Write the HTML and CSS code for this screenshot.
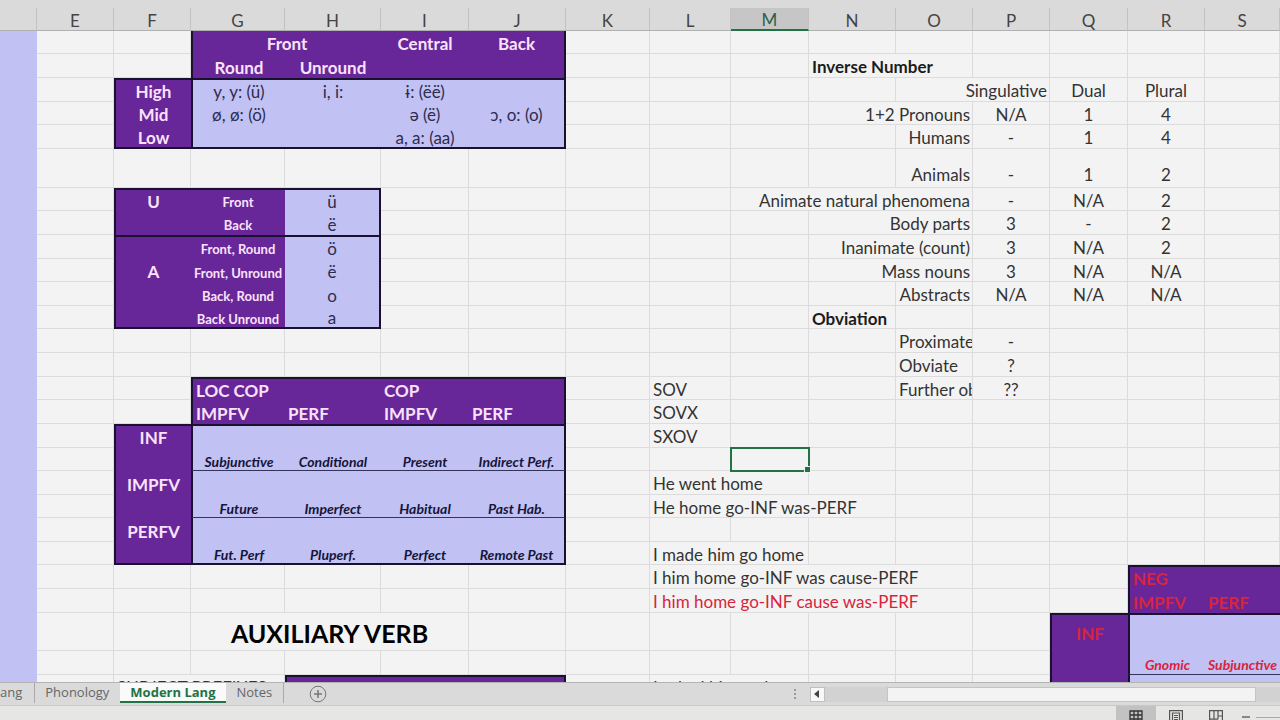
FILE: index.html
```
<!DOCTYPE html>
<html lang="en">
<head>
    <meta charset="UTF-8">
    <meta name="viewport" content="width=device-width, initial-scale=1.0">
    <title>Modern Lang</title>
    <link rel="stylesheet" href="styles.css">
</head>
<body>
    <main class="sheet">
        <table class="grid">
            <colgroup>
                <col class="w37"><col class="w77"><col class="w77"><col class="w94"><col class="w96"><col class="w88"><col class="w97"><col class="w84">
                <col class="w81"><col class="w78"><col class="w87"><col class="w77"><col class="w77"><col class="w78"><col class="w77"><col>
            </colgroup>
            <thead>
                <tr>
                    <th></th><th>E</th><th>F</th><th>G</th><th>H</th><th>I</th><th>J</th><th>K</th>
                    <th>L</th><th class="current">M</th><th>N</th><th>O</th><th>P</th><th>Q</th><th>R</th><th>S</th>
                </tr>
            </thead>
            <tbody>
                <!-- Vowels / inverse number -->
                <tr class="short">
                    <td class="val"></td><td></td><td></td>
                    <td class="head bl" colspan="2">Front</td><td class="head">Central</td><td class="head br">Back</td>
                    <td></td><td></td><td></td><td></td><td></td><td></td><td></td><td></td><td></td>
                </tr>
                <tr>
                    <td class="val"></td><td></td><td></td>
                    <td class="head bl">Round</td><td class="head">Unround</td><td class="head"></td><td class="head br"></td>
                    <td></td><td></td><td></td><td class="left strong" colspan="2">Inverse Number</td><td></td><td></td><td></td><td></td>
                </tr>
                <tr>
                    <td class="val"></td><td></td>
                    <td class="head bt bl">High</td><td class="val bt bl">y, y: (ü)</td><td class="val bt">i, i:</td><td class="val bt">ɨ: (ëë)</td><td class="val bt br"></td>
                    <td></td><td></td><td></td><td></td><td class="right" colspan="2">Singulative</td><td>Dual</td><td>Plural</td><td></td>
                </tr>
                <tr class="short">
                    <td class="val"></td><td></td>
                    <td class="head bl">Mid</td><td class="val bl">ø, ø: (ö)</td><td class="val"></td><td class="val">ə (ë)</td><td class="val br">ɔ, o: (o)</td>
                    <td></td><td></td><td></td><td class="right" colspan="2">1+2 Pronouns</td><td>N/A</td><td>1</td><td>4</td><td></td>
                </tr>
                <tr>
                    <td class="val"></td><td></td>
                    <td class="head bl bb">Low</td><td class="val bl bb"></td><td class="val bb"></td><td class="val bb">a, a: (aa)</td><td class="val br bb"></td>
                    <td></td><td></td><td></td><td></td><td class="right">Humans</td><td>-</td><td>1</td><td>4</td><td></td>
                </tr>
                <tr class="tall">
                    <td class="val"></td><td></td><td></td><td></td><td></td><td></td><td></td><td></td>
                    <td></td><td></td><td></td><td class="right">Animals</td><td>-</td><td>1</td><td>2</td><td></td>
                </tr>

                <!-- Harmony -->
                <tr class="short">
                    <td class="val"></td><td></td>
                    <td class="head bt bl">U</td><td class="head small bt">Front</td><td class="val bt br">ü</td><td></td><td></td><td></td>
                    <td></td><td class="right" colspan="3">Animate natural phenomena</td><td>-</td><td>N/A</td><td>2</td><td></td>
                </tr>
                <tr>
                    <td class="val"></td><td></td>
                    <td class="head bl"></td><td class="head small">Back</td><td class="val br">ë</td><td></td><td></td><td></td>
                    <td></td><td></td><td class="right" colspan="2">Body parts</td><td>3</td><td>-</td><td>2</td><td></td>
                </tr>
                <tr>
                    <td class="val"></td><td></td>
                    <td class="head bt bl"></td><td class="head small bt">Front, Round</td><td class="val bt br">ö</td><td></td><td></td><td></td>
                    <td></td><td></td><td class="right" colspan="2">Inanimate (count)</td><td>3</td><td>N/A</td><td>2</td><td></td>
                </tr>
                <tr class="short">
                    <td class="val"></td><td></td>
                    <td class="head bl">A</td><td class="head small">Front, Unround</td><td class="val br">ë</td><td></td><td></td><td></td>
                    <td></td><td></td><td class="right" colspan="2">Mass nouns</td><td>3</td><td>N/A</td><td>N/A</td><td></td>
                </tr>
                <tr>
                    <td class="val"></td><td></td>
                    <td class="head bl"></td><td class="head small">Back, Round</td><td class="val br">o</td><td></td><td></td><td></td>
                    <td></td><td></td><td></td><td class="right">Abstracts</td><td>N/A</td><td>N/A</td><td>N/A</td><td></td>
                </tr>
                <tr class="short">
                    <td class="val"></td><td></td>
                    <td class="head bl bb"></td><td class="head small bb">Back Unround</td><td class="val br bb">a</td><td></td><td></td><td></td>
                    <td></td><td></td><td class="left strong">Obviation</td><td></td><td></td><td></td><td></td><td></td>
                </tr>
                <tr>
                    <td class="val"></td><td></td><td></td><td></td><td></td><td></td><td></td><td></td>
                    <td></td><td></td><td></td><td class="left">Proximate</td><td>-</td><td></td><td></td><td></td>
                </tr>
                <tr>
                    <td class="val"></td><td></td><td></td><td></td><td></td><td></td><td></td><td></td>
                    <td></td><td></td><td></td><td class="left">Obviate</td><td>?</td><td></td><td></td><td></td>
                </tr>

                <!-- Copulas / word order -->
                <tr class="short">
                    <td class="val"></td><td></td><td></td>
                    <td class="head left bt bl">LOC COP</td><td class="head bt"></td><td class="head left bt">COP</td><td class="head bt br"></td>
                    <td></td><td class="left">SOV</td><td></td><td></td><td class="left">Further obviate</td><td>??</td><td></td><td></td><td></td>
                </tr>
                <tr>
                    <td class="val"></td><td></td><td></td>
                    <td class="head left bl">IMPFV</td><td class="head left">PERF</td><td class="head left">IMPFV</td><td class="head left br">PERF</td>
                    <td></td><td class="left">SOVX</td><td></td><td></td><td></td><td></td><td></td><td></td><td></td>
                </tr>
                <tr>
                    <td class="val"></td><td></td>
                    <td class="head bt bl">INF</td><td class="val bt bl"></td><td class="val bt"></td><td class="val bt"></td><td class="val bt br"></td>
                    <td></td><td class="left">SXOV</td><td></td><td></td><td></td><td></td><td></td><td></td><td></td>
                </tr>
                <tr class="short">
                    <td class="val"></td><td></td>
                    <td class="head bl"></td><td class="val form bl">Subjunctive</td><td class="val form">Conditional</td><td class="val form">Present</td><td class="val form br">Indirect Perf.</td>
                    <td></td><td></td><td class="selected"></td><td></td><td></td><td></td><td></td><td></td><td></td>
                </tr>
                <tr>
                    <td class="val"></td><td></td>
                    <td class="head bl">IMPFV</td><td class="val bl"></td><td class="val"></td><td class="val"></td><td class="val br"></td>
                    <td></td><td class="left" colspan="2">He went home</td><td></td><td></td><td></td><td></td><td></td><td></td>
                </tr>
                <tr class="short">
                    <td class="val"></td><td></td>
                    <td class="head bl"></td><td class="val form bl">Future</td><td class="val form">Imperfect</td><td class="val form">Habitual</td><td class="val form br">Past Hab.</td>
                    <td></td><td class="left" colspan="3">He home go-INF was-PERF</td><td></td><td></td><td></td><td></td><td></td>
                </tr>
                <tr>
                    <td class="val"></td><td></td>
                    <td class="head bl">PERFV</td><td class="val bl"></td><td class="val"></td><td class="val"></td><td class="val br"></td>
                    <td></td><td></td><td></td><td></td><td></td><td></td><td></td><td></td><td></td>
                </tr>
                <tr class="short">
                    <td class="val"></td><td></td>
                    <td class="head bl bb"></td><td class="val form bl bb">Fut. Perf</td><td class="val form bb">Pluperf.</td><td class="val form bb">Perfect</td><td class="val form br bb">Remote Past</td>
                    <td></td><td class="left" colspan="2">I made him go home</td><td></td><td></td><td></td><td></td><td></td><td></td>
                </tr>
                <tr>
                    <td class="val"></td><td></td><td></td><td></td><td></td><td></td><td></td><td></td>
                    <td class="left" colspan="4">I him home go-INF was cause-PERF</td><td></td><td></td>
                    <td class="head red left bt bl">NEG</td><td class="head bt"></td>
                </tr>
                <tr>
                    <td class="val"></td><td></td><td></td><td></td><td></td><td></td><td></td><td></td>
                    <td class="left red" colspan="4">I him home go-INF cause was-PERF</td><td></td><td></td>
                    <td class="head red left bl">IMPFV</td><td class="head red left">PERF</td>
                </tr>

                <!-- Auxiliary verb -->
                <tr class="title">
                    <td class="val"></td><td></td><td></td><td class="heading" colspan="3">AUXILIARY VERB</td><td></td><td></td>
                    <td></td><td></td><td></td><td></td><td></td>
                    <td class="head red bt bl">INF</td><td class="val bt bl"></td><td class="val bt"></td>
                </tr>
                <tr>
                    <td class="val"></td><td></td><td></td><td></td><td></td><td></td><td></td><td></td>
                    <td></td><td></td><td></td><td></td><td></td>
                    <td class="head bl"></td><td class="val form red bl">Gnomic</td><td class="val form red">Subjunctive</td>
                </tr>
                <tr>
                    <td class="val"></td><td></td><td class="left" colspan="2">SUBJECT PREFIXES</td>
                    <td class="head bt bl">Single</td><td class="head bt">Dual</td><td class="head bt br">Plural</td><td></td>
                    <td class="left" colspan="2">I asked him and</td><td></td><td></td><td></td>
                    <td class="head red bl">IMPFV</td><td class="val bl"></td><td class="val"></td>
                </tr>
            </tbody>
        </table>
    </main>

    <nav class="tabbar">
        <div class="tabs">
            <a class="tab first" href="#">ang</a>
            <a class="tab" href="#">Phonology</a>
            <a class="tab active" href="#">Modern Lang</a>
            <a class="tab last" href="#">Notes</a>
            <button class="add" aria-label="New sheet">
                <svg width="18" height="18" viewBox="0 0 18 18" fill="none" stroke="#777">
                    <circle cx="9" cy="9" r="7.8"/>
                    <path d="M9 5v8M5 9h8" stroke-width="1.5"/>
                </svg>
            </button>
        </div>
        <div class="hscroll">
            <span class="grip"><i></i><i></i><i></i></span>
            <button class="arrow" aria-label="Scroll left">
                <svg width="6" height="8" viewBox="0 0 6 8"><path d="M5 0v8L0 4z" fill="#444"/></svg>
            </button>
            <div class="track"><div class="thumb"></div></div>
        </div>
    </nav>

    <footer class="status">
        <button class="view on" aria-label="Normal">
            <svg width="14" height="14" viewBox="0 0 14 14" fill="none" stroke="#333" stroke-width="1.3">
                <path d="M1 1h12v12H1zM1 5h12M1 9h12M5 1v12M9 1v12"/>
            </svg>
        </button>
        <button class="view" aria-label="Page Layout">
            <svg width="14" height="14" viewBox="0 0 14 14" fill="none" stroke="#555" stroke-width="1.2">
                <path d="M.6 14V.6h12.8V14M3.5 14V3h7v11M5 5.5h4M5 7.5h4M5 9.5h4M5 11.5h4"/>
            </svg>
        </button>
        <button class="view" aria-label="Page Break Preview">
            <svg width="14" height="14" viewBox="0 0 14 14" fill="none" stroke="#555" stroke-width="1.2">
                <path d="M.6 14V.6h12.8V14M.6 9.2h8.4M5 .6v8.6M9 .6v8.6M9 6h4.4"/>
            </svg>
        </button>
        <span class="minus"></span>
        <span class="zoomline"></span>
    </footer>
</body>
</html>
```
FILE: styles.css
```
* {
    box-sizing: border-box;
}

body {
    margin: 0;
    height: 100vh;
    display: flex;
    flex-direction: column;
    overflow: hidden;
    background: #f3f3f3;
    color: #333;
    font-family: Lato, "Noto Sans", sans-serif;
    font-size: 17px;
}

button {
    padding: 0;
    border: none;
    background: none;
}

/* Sheet */
.sheet {
    flex: 1;
    min-height: 0;
    overflow: hidden;
    padding-top: 8px;
    background: linear-gradient(#dadada 30px, #f3f3f3 30px);
}

.grid {
    width: 100%;
    table-layout: fixed;
    border-collapse: separate;
    border-spacing: 0;
}

.w37 { width: 37px; }
.w77 { width: 77px; }
.w78 { width: 78px; }
.w81 { width: 81px; }
.w84 { width: 84px; }
.w87 { width: 87px; }
.w88 { width: 88px; }
.w94 { width: 94px; }
.w96 { width: 96px; }
.w97 { width: 97px; }

th {
    height: 23px;
    padding: 3px 0 0;
    border-right: 1px solid #c2c2c2;
    border-bottom: 1px solid #b0b0b0;
    background: #dadada;
    color: #444;
    font-weight: 400;
    line-height: 19px;
}

th.current {
    padding-top: 2px;
    background: #c6c6c6;
    border-bottom: 2px solid #217346;
    color: #2c5e46;
}

td {
    height: 24px;
    padding: 2px 3px 0;
    border-right: 1px solid #dcdcdc;
    border-bottom: 1px solid #dcdcdc;
    line-height: 19px;
    text-align: center;
    white-space: nowrap;
    overflow: hidden;
}

.short td { height: 23px; }

.tall td {
    height: 39px;
    padding-top: 12px;
}

.title td { height: 38px; }

.left { text-align: left; }

.right {
    padding-right: 2px;
    text-align: right;
}

.strong {
    font-weight: 700;
    color: #1c1c1c;
}

td.head {
    border-width: 0;
    background: #672799;
    color: #fbe2fb;
    font-weight: 700;
}

td.val {
    border-width: 0;
    background: #c1c1f3;
    color: #2c2c50;
}

td.small {
    padding: 4px 0 0;
    font-size: 13px;
    line-height: 16px;
}

td.form {
    padding: 5px 0 0;
    border-bottom: 1px solid #33335c;
    color: #15153a;
    font-size: 14px;
    font-style: italic;
    font-weight: 700;
    line-height: 16px;
}

td.red { color: #d8243c; }

td.bt {
    padding-top: 1px;
    border-top: 2px solid #1a1030;
}

td.bl { border-left: 2px solid #1a1030; }
td.bb { border-bottom: 2px solid #1a1030; }
td.br { border-right: 2px solid #1a1030; }

td.small.bt { padding-top: 2px; }

td.heading {
    color: #000;
    font-size: 25px;
    font-weight: 700;
    line-height: 32px;
}

td.selected {
    position: relative;
    overflow: visible;
}

.selected::before {
    content: "";
    position: absolute;
    inset: -1px -2px -2px -1px;
    border: 2px solid #217346;
}

.selected::after {
    content: "";
    position: absolute;
    right: -3px;
    bottom: -3px;
    width: 5px;
    height: 5px;
    background: #217346;
    border: 1px solid #f3f3f3;
}

/* Sheet tabs */
.tabbar {
    display: flex;
    height: 24px;
    border-top: 1px solid #b4b4b4;
    border-bottom: 1px solid #c8c8c8;
    background: #dadada;
    font-family: "Open Sans", "Noto Sans", sans-serif;
    font-size: 13px;
}

.tabs {
    flex: 1;
    display: flex;
    align-items: flex-start;
}

.tab {
    height: 20px;
    padding: 0 11px 0 10px;
    color: #666;
    line-height: 18px;
    text-decoration: none;
}

.tab.first {
    padding: 0 12px 0 0;
    border-right: 1px solid #aaa;
}

.tab.active {
    background: #fafafa;
    border-bottom: 2px solid #217346;
    color: #217346;
    font-weight: 700;
}

.tab.last { border-right: 1px solid #aaa; }

.add {
    height: 22px;
    margin-left: 25px;
}

.add svg { display: block; }

.hscroll {
    flex: 0 0 38%;
    display: flex;
    align-items: center;
}

.grip {
    display: grid;
    gap: 2px;
    width: 16px;
}

.grip i {
    width: 2px;
    height: 2px;
    background: #999;
}

.arrow {
    display: flex;
    align-items: center;
    justify-content: center;
    width: 15px;
    height: 15px;
    border: 1px solid #c0c0c0;
    background: #f8f8f8;
}

.track {
    flex: 1;
    height: 15px;
    padding: 0 24px 0 62px;
    background: #d2d2d2;
}

.thumb {
    height: 15px;
    border: 1px solid #c4c4c4;
    background: #f3f3f3;
}

/* Status bar */
.status {
    display: flex;
    justify-content: flex-end;
    height: 14px;
    overflow: hidden;
    background: #e6e6e5;
}

.view {
    display: flex;
    align-items: flex-start;
    justify-content: center;
    width: 40px;
    height: 24px;
    padding-top: 4px;
}

.view.on { background: #c2c2c2; }

.minus {
    width: 8px;
    height: 2px;
    margin: 10px 6px 0;
    background: #888;
}

.zoomline {
    width: 24px;
    height: 1px;
    margin-top: 11px;
    background: #aaa;
}
```
